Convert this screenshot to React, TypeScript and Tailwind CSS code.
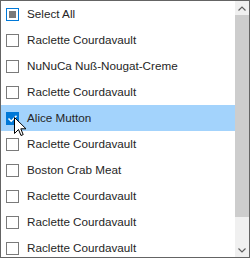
import React from "react";

const items = [
  "Raclette Courdavault",
  "NuNuCa Nuß-Nougat-Creme",
  "Raclette Courdavault",
  "Alice Mutton",
  "Raclette Courdavault",
  "Boston Crab Meat",
  "Raclette Courdavault",
  "Raclette Courdavault",
  "Raclette Courdavault",
];

function Box({ state }: { state: "none" | "checked" | "indeterminate" }) {
  if (state === "checked") {
    return (
      <div className="w-[13px] h-[13px] bg-[#0078d7] flex items-center justify-center shrink-0">
        <svg width="11" height="11" viewBox="0 0 11 11">
          <path d="M1.5 5.5 L4.2 8.2 L9.5 2.8" fill="none" stroke="white" strokeWidth="1.6" />
        </svg>
      </div>
    );
  }
  if (state === "indeterminate") {
    return (
      <div className="w-[13px] h-[13px] border border-[#0078d7] bg-white flex items-center justify-center shrink-0">
        <div className="w-[7px] h-[7px] bg-[#7a7a7a]" />
      </div>
    );
  }
  return <div className="w-[13px] h-[13px] border border-[#7a7a7a] bg-white shrink-0" />;
}

export default function App() {
  return (
    <div
      className="relative w-[250px] h-[258px] border border-[#646464] bg-white flex overflow-hidden"
      style={{ fontFamily: "'Segoe UI', 'Liberation Sans', Arial, sans-serif" }}
    >
      <div className="flex-1 flex flex-col">
        <div className="h-[26px] shrink-0 flex items-center pl-[5px] gap-[8px]">
          <Box state="indeterminate" />
          <span className="text-[11.7px] text-[#262626] whitespace-nowrap">Select All</span>
        </div>
        {items.map((t, i) => (
          <div
            key={i}
            className={`h-[26px] shrink-0 flex items-center pl-[5px] gap-[8px] ${i === 3 ? "bg-[#a3d3fc]" : ""}`}
          >
            <Box state={i === 3 ? "checked" : "none"} />
            <span className="text-[11.7px] text-[#262626] whitespace-nowrap">{t}</span>
          </div>
        ))}
      </div>
      <div className="w-[14px] shrink-0 flex flex-col bg-[#f0f0f0]">
        <div className="h-[14px] shrink-0 flex items-center justify-center">
          <svg width="8" height="5" viewBox="0 0 8 5">
            <path d="M0.5 4.5 L4 1 L7.5 4.5" fill="none" stroke="#606060" strokeWidth="1.2" />
          </svg>
        </div>
        <div className="h-[202px] shrink-0 bg-[#cdcdcd]" />
        <div className="flex-1" />
        <div className="h-[14px] shrink-0 flex items-center justify-center">
          <svg width="8" height="5" viewBox="0 0 8 5">
            <path d="M0.5 0.5 L4 4 L7.5 0.5" fill="none" stroke="#606060" strokeWidth="1.2" />
          </svg>
        </div>
      </div>
      <svg
        className="absolute left-[13px] top-[116px]"
        width="13"
        height="21"
        viewBox="0 0 13 21"
      >
        <path
          d="M0.5 0.5 L0.5 16.5 L4.5 12.5 L7 18.5 L9.2 17.6 L6.8 11.8 L12 11.8 Z"
          fill="white"
          stroke="black"
          strokeWidth="1"
          strokeLinejoin="miter"
        />
      </svg>
    </div>
  );
}
